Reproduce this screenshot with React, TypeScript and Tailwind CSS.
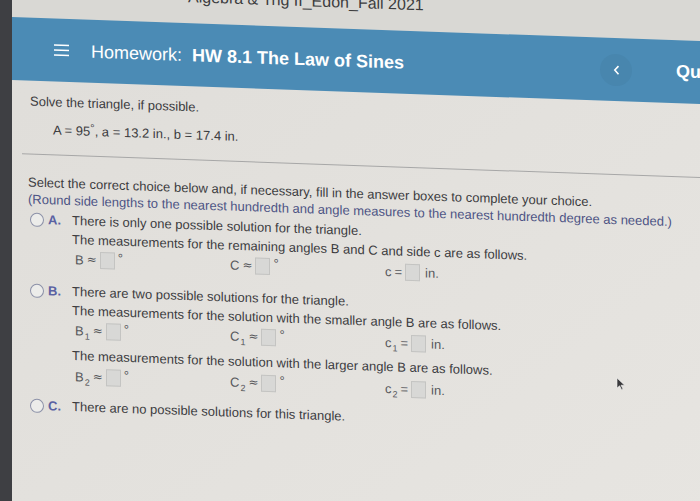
import React from 'react';

// MyMathLab style homework question, photographed slightly askew (skewed view).

function Box() {
  return <span className="inline-block h-[17px] w-[15px] border border-[#c4c4c2] bg-[#d8d8d6]" />;
}

function Sub({ n }: { n?: string }) {
  if (!n) return null;
  return <span className="relative top-[4px] ml-[1px] text-[9px] leading-none">{n}</span>;
}

function Angle({ v, sub }: { v: string; sub?: string }) {
  return (
    <span className="flex items-center">
      <span>
        {v}
        <Sub n={sub} />
      </span>
      <span className="ml-[3px] font-['DejaVu_Sans',sans-serif] text-[12px]">≈</span>
      <span className="ml-[3px] flex">
        <Box />
      </span>
      <span className="mb-[6px] ml-[3px] text-[13px] leading-none">°</span>
    </span>
  );
}

function Side({ v, sub }: { v: string; sub?: string }) {
  return (
    <span className="flex items-center">
      <span>
        {v}
        <Sub n={sub} />
      </span>
      <span className="ml-[3px] text-[13px]">=</span>
      <span className="ml-[3px] flex">
        <Box />
      </span>
      <span className="ml-[5px]">in.</span>
    </span>
  );
}

function AnswerRow({ sub, children }: { sub?: string; children?: React.ReactNode }) {
  return (
    <div className="flex h-[20px] items-center pl-[3px] text-[13px] text-[#56575b]">
      <div className="w-[155px]">
        <Angle v="B" sub={sub} />
      </div>
      <div className="w-[155px]">
        <Angle v="C" sub={sub} />
      </div>
      <div className="mt-[3px]">
        <Side v="c" sub={sub} />
      </div>
      {children}
    </div>
  );
}

function Choice({ letter, children, className = '' }: { letter: string; children: React.ReactNode; className?: string }) {
  return (
    <div className={`flex pl-[18px] ${className}`}>
      <span className="mt-[3px] h-[14px] w-[14px] shrink-0 rounded-full border-[1.5px] border-[#8c91a8] bg-[#ececea]" />
      <span className="ml-[4px] w-[24px] shrink-0 font-bold leading-[19px] text-[#5a61a2]">{letter}</span>
      <div className="flex-1 leading-[19px]">{children}</div>
    </div>
  );
}

function Pointer() {
  return (
    <svg className="-translate-y-[12px] ml-auto mr-[74px] h-[13px] w-[10px]" viewBox="0 0 10 13">
      <path d="M1 1 L1 11 L3.6 8.6 L5.6 12.4 L7 11.7 L5 8 L8.6 7.8 Z" fill="#3a3a3c" stroke="#f2f2f2" strokeWidth="0.6" />
    </svg>
  );
}

export default function App() {
  return (
    <div className="flex h-[501px] w-[700px] overflow-hidden bg-[#e2e0dc] font-['Liberation_Sans',Arial,sans-serif]">
      {/* borde oscuro de la pantalla */}
      <div className="w-[12px] shrink-0 bg-[#3e3f43]" />

      <div className="flex-1 overflow-hidden">
        <div className="-mt-[20px] h-[541px] w-[688px] skew-y-[2deg] bg-linear-to-br from-[#dfddd9] to-[#e7e5e1]">
          {/* course strip */}
          <div className="h-[49px] bg-[#d9d8d4] pl-[176px] pt-[15px] text-[16px] leading-[16px] text-[#3c3c3e]">
            Algebra &amp; Trig II_Edon_Fall 2021
          </div>

          {/* header */}
          <header className="flex h-[63px] items-center overflow-hidden whitespace-nowrap bg-[#4b8bb5] text-white">
            <div className="flex flex-1 items-center">
              <svg className="ml-[42px] h-[13px] w-[15px]" viewBox="0 0 15 13">
                <path d="M0 1.5h15M0 6.5h15M0 11.5h15" stroke="white" strokeWidth="1.6" />
              </svg>
              <h1 className="ml-[22px] text-[18px] leading-none">
                <span>Homework:</span>
                <span className="ml-[10px] font-bold">HW 8.1 The Law of Sines</span>
              </h1>
            </div>
            <div className="flex w-[100px] shrink-0 items-center">
              <div className="flex h-[32px] w-[32px] shrink-0 items-center justify-center rounded-full bg-[#4886ae]">
                <svg className="h-[10px] w-[7px]" viewBox="0 0 7 10">
                  <path d="M5.5 1 L1.8 5 L5.5 9" fill="none" stroke="white" strokeWidth="1.6" />
                </svg>
              </div>
              <span className="ml-[44px] text-[18px] font-bold">Question</span>
            </div>
          </header>

          {/* question */}
          <div className="pt-[12px] text-[13px] leading-[17px] text-[#3b3b3e]">
            <p className="pl-[18px]">Solve the triangle, if possible.</p>
            <p className="mt-[11px] pl-[41px]">
              A = 95<span className="relative -top-[4px] text-[11px]">°</span>, a = 13.2 in., b = 17.4 in.
            </p>

            <hr className="ml-[10px] mt-[15px] border-t border-[#a7a7a7]" />

            <p className="mt-[19px] pl-[16px]">
              Select the correct choice below and, if necessary, fill in the answer boxes to complete your choice.
            </p>
            <p className="pl-[16px] text-[#4c5384]">
              (Round side lengths to the nearest hundredth and angle measures to the nearest hundredth degree as needed.)
            </p>

            <Choice letter="A." className="mt-[2px]">
              <p>There is only one possible solution for the triangle.</p>
              <p>The measurements for the remaining angles B and C and side c are as follows.</p>
              <AnswerRow />
            </Choice>

            <Choice letter="B." className="mt-[13px]">
              <p>There are two possible solutions for the triangle.</p>
              <p>The measurements for the solution with the smaller angle B are as follows.</p>
              <AnswerRow sub="1" />
              <p className="mt-[6px]">The measurements for the solution with the larger angle B are as follows.</p>
              <div className="mt-[1px]">
                <AnswerRow sub="2">
                  <Pointer />
                </AnswerRow>
              </div>
            </Choice>

            <Choice letter="C." className="mt-[11px]">
              <p>There are no possible solutions for this triangle.</p>
            </Choice>
          </div>
        </div>
      </div>
    </div>
  );
}
